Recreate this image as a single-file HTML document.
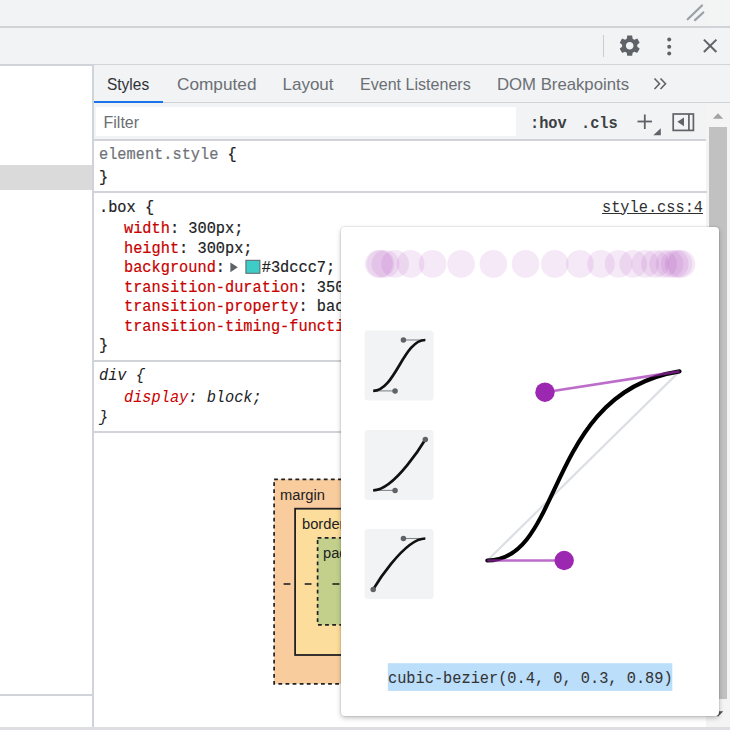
<!DOCTYPE html>
<html><head><meta charset="utf-8">
<style>
*{margin:0;padding:0;box-sizing:border-box}
html,body{width:730px;height:730px;overflow:hidden;background:#fff;position:relative}
body{font-family:"Liberation Sans",sans-serif;color:#202124}
.a{position:absolute}
.mono{font-family:"Liberation Mono",monospace;font-size:16px;white-space:pre;line-height:1;-webkit-text-stroke:0.2px currentColor;transform-origin:0 0;transform:scaleX(0.95625)}
.sans{font-family:"Liberation Sans",sans-serif;font-size:16px;white-space:pre;line-height:1}
.hl{background:#d0d3d7}
.prop{color:#c80000}
.val{color:#202124}
</style></head><body>
<!-- top bar -->
<div class="a" style="left:0;top:0;width:730px;height:27px;background:#f1f3f4"></div>
<div class="a" style="left:709px;top:0;width:21px;height:26px;background:#f3f4f4"></div>
<div class="a hl" style="left:0;top:26px;width:730px;height:1.5px"></div>
<svg class="a" style="left:680px;top:0" width="30" height="26"><g stroke="#9aa0a6" stroke-width="2.2" stroke-linecap="round"><line x1="7.7" y1="19.3" x2="22" y2="5.5"/><line x1="15" y1="20.1" x2="23.3" y2="12.5"/></g></svg>
<!-- toolbar -->
<div class="a" style="left:0;top:27.5px;width:730px;height:37px;background:#f1f3f4"></div>
<div class="a hl" style="left:0;top:64px;width:730px;height:1.5px"></div>
<div class="a" style="left:603px;top:35px;width:1.3px;height:21.5px;background:#cbcdd1"></div>
<svg class="a" style="left:616.5px;top:33.2px" width="25.4" height="25.4" viewBox="0 0 24 24"><path fill="#5f6368" d="M19.14,12.94c0.04-0.3,0.06-0.61,0.06-0.94c0-0.32-0.02-0.64-0.07-0.94l2.03-1.58c0.18-0.14,0.23-0.41,0.12-0.61l-1.92-3.32c-0.12-0.22-0.37-0.29-0.59-0.22l-2.39,0.96c-0.5-0.38-1.03-0.7-1.62-0.94L14.4,2.81c-0.04-0.24-0.24-0.41-0.48-0.41h-3.84c-0.24,0-0.43,0.17-0.47,0.41L9.25,5.35C8.66,5.59,8.12,5.92,7.63,6.29L5.24,5.33c-0.22-0.08-0.47,0-0.59,0.22L2.74,8.87C2.62,9.08,2.66,9.34,2.86,9.48l2.03,1.58C4.84,11.36,4.8,11.69,4.8,12s0.02,0.64,0.07,0.94l-2.03,1.58c-0.18,0.14-0.23,0.41-0.12,0.61l1.92,3.32c0.12,0.22,0.37,0.29,0.59,0.22l2.39-0.96c0.5,0.38,1.03,0.7,1.62,0.94l0.36,2.54c0.05,0.24,0.24,0.41,0.48,0.41h3.84c0.24,0,0.44-0.17,0.47-0.41l0.36-2.54c0.59-0.24,1.13-0.56,1.62-0.94l2.39,0.96c0.22,0.08,0.47,0,0.59-0.22l1.92-3.32c0.12-0.22,0.07-0.47-0.12-0.61L19.14,12.94z M12,15.6c-1.98,0-3.6-1.62-3.6-3.6s1.62-3.6,3.6-3.6s3.6,1.62,3.6,3.6S13.98,15.6,12,15.6z"/></svg>
<svg class="a" style="left:660px;top:34px" width="20" height="24"><g fill="#5f6368"><circle cx="9.2" cy="5.6" r="2"/><circle cx="9.2" cy="12.8" r="2"/><circle cx="9.2" cy="19.5" r="2"/></g></svg>
<svg class="a" style="left:700px;top:36px" width="20" height="20"><g stroke="#5f6368" stroke-width="2"><line x1="3.9" y1="3.6" x2="16.4" y2="16"/><line x1="16.4" y1="3.6" x2="3.9" y2="16"/></g></svg>

<!-- left panel -->
<div class="a" style="left:0;top:165px;width:92px;height:25px;background:#dadada"></div>
<div class="a hl" style="left:0;top:694px;width:92px;height:1.5px"></div>
<div class="a hl" style="left:92.3px;top:65px;width:1.4px;height:665px"></div>
<div class="a" style="left:0;top:727.3px;width:730px;height:3px;background:#dcdee1"></div>

<!-- tabs -->
<div class="a" style="left:93.7px;top:65.3px;width:637px;height:37px;background:#f1f3f4"></div>
<div class="a hl" style="left:93.7px;top:102px;width:637px;height:1.2px"></div>
<div class="a" style="left:93.7px;top:100.5px;width:69.5px;height:2.6px;background:#1a73e8"></div>
<div class="a sans" style="left:107px;top:76.2px;font-size:17px;color:#303134;transform-origin:0 0;transform:scaleX(0.91)">Styles</div>
<div class="a sans" style="left:176.5px;top:76.2px;font-size:17px;color:#6b6f74;transform-origin:0 0;transform:scaleX(1.013)">Computed</div>
<div class="a sans" style="left:282.5px;top:76.2px;font-size:17px;color:#6b6f74;transform-origin:0 0;transform:scaleX(1.0)">Layout</div>
<div class="a sans" style="left:359.5px;top:76.2px;font-size:17px;color:#6b6f74;transform-origin:0 0;transform:scaleX(0.945)">Event Listeners</div>
<div class="a sans" style="left:496.5px;top:76.2px;font-size:17px;color:#6b6f74;transform-origin:0 0;transform:scaleX(0.984)">DOM Breakpoints</div>
<svg class="a" style="left:650px;top:74px" width="20" height="20"><g fill="none" stroke="#5f6368" stroke-width="1.6"><polyline points="4.5,4.5 9.5,9.8 4.5,15"/><polyline points="10.5,4.5 15.5,9.8 10.5,15"/></g></svg>

<!-- filter row -->
<div class="a" style="left:93.7px;top:103.2px;width:613px;height:36.3px;background:#f1f3f4"></div>
<div class="a" style="left:96.3px;top:107.3px;width:419.9px;height:28.3px;background:#fff"></div>
<div class="a sans" style="left:103.5px;top:115px;color:#6b6f74">Filter</div>
<div class="a mono" style="left:530px;top:116px;color:#3c4043;font-weight:bold;-webkit-text-stroke:0">:hov</div>
<div class="a mono" style="left:580.5px;top:116px;color:#3c4043;font-weight:bold;-webkit-text-stroke:0">.cls</div>
<svg class="a" style="left:635px;top:112px" width="30" height="26"><g stroke="#5f6368" stroke-width="1.8"><line x1="2.5" y1="9.5" x2="17" y2="9.5"/><line x1="9.8" y1="2.5" x2="9.8" y2="17"/></g><polygon fill="#5f6368" points="25.8,16.3 25.8,23.2 18.3,23.2"/></svg>
<svg class="a" style="left:670px;top:111px" width="28" height="24"><rect x="3.2" y="3" width="20.2" height="16.4" fill="none" stroke="#5f6368" stroke-width="1.7"/><line x1="18.9" y1="3" x2="18.9" y2="19.4" stroke="#5f6368" stroke-width="1.7"/><polygon fill="#5f6368" points="14,6.4 14,15.3 7.3,10.8"/></svg>
<div class="a hl" style="left:93.7px;top:139.3px;width:613px;height:1.5px"></div>

<!-- scrollbar -->
<div class="a" style="left:706.3px;top:103.2px;width:24px;height:624px;background:#f4f4f4"></div>
<div class="a" style="left:709.2px;top:127px;width:17.8px;height:572px;background:#c1c1c1"></div>
<svg class="a" style="left:708px;top:108px" width="20" height="14"><polygon fill="#a3a3a3" points="4.9,10.7 15.2,10.7 10,5.3"/></svg>
<svg class="a" style="left:708px;top:708px" width="20" height="14"><polygon fill="#505050" points="4.9,3.3 15.2,3.3 10,8.7"/></svg>

<!-- styles content -->
<div class="a mono" style="left:99px;top:147px;color:#6f7378">element.style <span style="color:#202124">{</span></div>
<div class="a mono" style="left:99px;top:170px;color:#202124">}</div>
<div class="a hl" style="left:93.7px;top:191.3px;width:613px;height:1.5px"></div>

<div class="a mono" style="left:99px;top:199.5px;color:#202124">.box {</div>
<div class="a mono" style="left:602px;top:199.5px;color:#303030;text-decoration:underline;-webkit-text-stroke:0">style.css:4</div>
<div class="a mono" style="left:124.4px;top:221px;"><span class="prop">width</span>: 300px;</div>
<div class="a mono" style="left:124.4px;top:240.5px;"><span class="prop">height</span>: 300px;</div>
<div class="a mono" style="left:124.4px;top:260px;"><span class="prop">background</span>:    #3dccc7;</div>
<svg class="a" style="left:228px;top:259px" width="34" height="16"><polygon fill="#5f6368" points="2.4,3.4 9.8,8.3 2.4,13.3"/><rect x="17.9" y="1.3" width="14" height="13" fill="#3dccc7" stroke="#5f6368" stroke-width="1"/></svg>
<div class="a mono" style="left:124.4px;top:279.5px;"><span class="prop">transition-duration</span>: 350ms;</div>
<div class="a mono" style="left:124.4px;top:299px;"><span class="prop">transition-property</span>: background;</div>
<div class="a mono" style="left:124.4px;top:318.5px;"><span class="prop">transition-timing-function</span>: cubic-bezier(0.4, 0, 0.3, 0.89);</div>
<div class="a mono" style="left:99px;top:338px;color:#202124">}</div>
<div class="a hl" style="left:93.7px;top:360px;width:613px;height:1.5px"></div>

<div class="a mono" style="left:99px;top:368px;color:#202124;font-style:italic;-webkit-text-stroke:0">div {</div>
<div class="a mono" style="left:124.4px;top:390px;font-style:italic;-webkit-text-stroke:0"><span class="prop">display</span>: block;</div>
<div class="a mono" style="left:99px;top:409.5px;color:#202124;font-style:italic;-webkit-text-stroke:0">}</div>
<div class="a hl" style="left:93.7px;top:431px;width:613px;height:1.5px"></div>

<!-- box model -->
<svg class="a" style="left:260px;top:470px" width="100" height="230">
<g transform="translate(-260,-470)">
<rect x="274.1" y="479.3" width="200" height="204.5" fill="#f9cc9d" stroke="#202124" stroke-width="1.7" stroke-dasharray="3.8 3.3"/>
<rect x="295.1" y="508.7" width="200" height="146.3" fill="#fddd9b" stroke="#202124" stroke-width="1.8"/>
<rect x="317.6" y="537.9" width="200" height="87" fill="#c3d08b" stroke="#202124" stroke-width="1.7" stroke-dasharray="3.8 3.3"/>
<g stroke="#202124" stroke-width="1.6">
<line x1="283.6" y1="584" x2="290.4" y2="584"/>
<line x1="304.7" y1="584" x2="311.5" y2="584"/>
<line x1="332.4" y1="584" x2="339.4" y2="584"/>
</g>
</g>
</svg>
<div class="a" style="left:280.4px;top:488px;font-size:14px;color:#202124;white-space:pre;line-height:1;transform-origin:0 0;transform:scaleX(1.05)">margin</div>
<div class="a" style="left:301.5px;top:517px;font-size:14px;color:#202124;white-space:pre;line-height:1;transform-origin:0 0;transform:scaleX(1.05)">border</div>
<div class="a" style="left:322.6px;top:546px;font-size:14px;color:#202124;white-space:pre;line-height:1;transform-origin:0 0;transform:scaleX(1.05)">padding</div>

<!-- popup -->
<div class="a" style="left:341px;top:227.4px;width:378px;height:488.6px;background:#fff;border-radius:4px;box-shadow:0 0 0 1px rgba(0,0,0,0.06),0 2px 5px rgba(0,0,0,0.25)">
</div>
<svg class="a" style="left:341px;top:227px" width="378" height="489" id="pop">
<circle cx="37.85" cy="36.90" r="13.85" fill="#9c27b0" fill-opacity="0.1"/>
<circle cx="39.37" cy="36.90" r="13.85" fill="#9c27b0" fill-opacity="0.1"/>
<circle cx="44.48" cy="36.90" r="13.85" fill="#9c27b0" fill-opacity="0.1"/>
<circle cx="54.17" cy="36.90" r="13.85" fill="#9c27b0" fill-opacity="0.1"/>
<circle cx="69.58" cy="36.90" r="13.85" fill="#9c27b0" fill-opacity="0.1"/>
<circle cx="91.65" cy="36.90" r="13.85" fill="#9c27b0" fill-opacity="0.1"/>
<circle cx="120.06" cy="36.90" r="13.85" fill="#9c27b0" fill-opacity="0.1"/>
<circle cx="152.31" cy="36.90" r="13.85" fill="#9c27b0" fill-opacity="0.1"/>
<circle cx="184.52" cy="36.90" r="13.85" fill="#9c27b0" fill-opacity="0.1"/>
<circle cx="213.76" cy="36.90" r="13.85" fill="#9c27b0" fill-opacity="0.1"/>
<circle cx="238.93" cy="36.90" r="13.85" fill="#9c27b0" fill-opacity="0.1"/>
<circle cx="260.06" cy="36.90" r="13.85" fill="#9c27b0" fill-opacity="0.1"/>
<circle cx="277.64" cy="36.90" r="13.85" fill="#9c27b0" fill-opacity="0.1"/>
<circle cx="292.20" cy="36.90" r="13.85" fill="#9c27b0" fill-opacity="0.1"/>
<circle cx="304.21" cy="36.90" r="13.85" fill="#9c27b0" fill-opacity="0.1"/>
<circle cx="314.07" cy="36.90" r="13.85" fill="#9c27b0" fill-opacity="0.1"/>
<circle cx="322.11" cy="36.90" r="13.85" fill="#9c27b0" fill-opacity="0.1"/>
<circle cx="328.57" cy="36.90" r="13.85" fill="#9c27b0" fill-opacity="0.1"/>
<circle cx="333.68" cy="36.90" r="13.85" fill="#9c27b0" fill-opacity="0.1"/>
<circle cx="337.59" cy="36.90" r="13.85" fill="#9c27b0" fill-opacity="0.1"/>
<circle cx="340.45" cy="36.90" r="13.85" fill="#9c27b0" fill-opacity="0.1"/>
<rect x="23.60" y="103.50" width="69" height="70" rx="3.5" fill="#f1f3f4"/>
<line x1="32.20" y1="163.90" x2="54.08" y2="163.90" stroke="#80868b" stroke-width="1.1"/>
<line x1="84.30" y1="113.00" x2="62.42" y2="113.00" stroke="#80868b" stroke-width="1.1"/>
<path d="M32.20,163.90 C54.08,163.90 62.42,113.00 84.30,113.00" fill="none" stroke="#111" stroke-width="2.7"/>
<circle cx="54.08" cy="163.90" r="2.75" fill="#5f6368"/>
<circle cx="62.42" cy="113.00" r="2.75" fill="#5f6368"/>
<rect x="23.60" y="203.00" width="69" height="70" rx="3.5" fill="#f1f3f4"/>
<line x1="32.20" y1="263.40" x2="54.08" y2="263.40" stroke="#80868b" stroke-width="1.1"/>
<line x1="84.30" y1="212.50" x2="84.30" y2="212.50" stroke="#80868b" stroke-width="1.1"/>
<path d="M32.20,263.40 C54.08,263.40 84.30,212.50 84.30,212.50" fill="none" stroke="#111" stroke-width="2.7"/>
<circle cx="54.08" cy="263.40" r="2.75" fill="#5f6368"/>
<circle cx="84.30" cy="212.50" r="2.75" fill="#5f6368"/>
<rect x="23.60" y="302.00" width="69" height="70" rx="3.5" fill="#f1f3f4"/>
<line x1="32.20" y1="362.40" x2="32.20" y2="362.40" stroke="#80868b" stroke-width="1.1"/>
<line x1="84.30" y1="311.50" x2="62.42" y2="311.50" stroke="#80868b" stroke-width="1.1"/>
<path d="M32.20,362.40 C32.20,362.40 62.42,311.50 84.30,311.50" fill="none" stroke="#111" stroke-width="2.7"/>
<circle cx="32.20" cy="362.40" r="2.75" fill="#5f6368"/>
<circle cx="62.42" cy="311.50" r="2.75" fill="#5f6368"/>
<line x1="146.30" y1="333.50" x2="338.50" y2="144.40" stroke="#dcdfe3" stroke-width="2.2"/>
<path d="M146.30,333.50 C223.18,333.50 203.96,165.20 338.50,144.40" fill="none" stroke="#000" stroke-width="4.1" stroke-linecap="round"/>
<line x1="146.30" y1="333.50" x2="223.18" y2="333.50" stroke="#9c27b0" stroke-opacity="0.68" stroke-width="2.6"/>
<line x1="338.50" y1="144.40" x2="203.96" y2="165.20" stroke="#9c27b0" stroke-opacity="0.68" stroke-width="2.6"/>
<circle cx="223.18" cy="333.50" r="9.7" fill="#9c27b0"/>
<circle cx="203.96" cy="165.20" r="9.7" fill="#9c27b0"/>
<rect x="46.80" y="436.20" width="284.5" height="27.7" fill="#bbdefb"/>
</svg>
<div class="a mono" id="cb" style="left:387.8px;top:671px;color:#333;-webkit-text-stroke:0.05px currentColor">cubic-bezier(0.4, 0, 0.3, 0.89)</div>
</body></html>
